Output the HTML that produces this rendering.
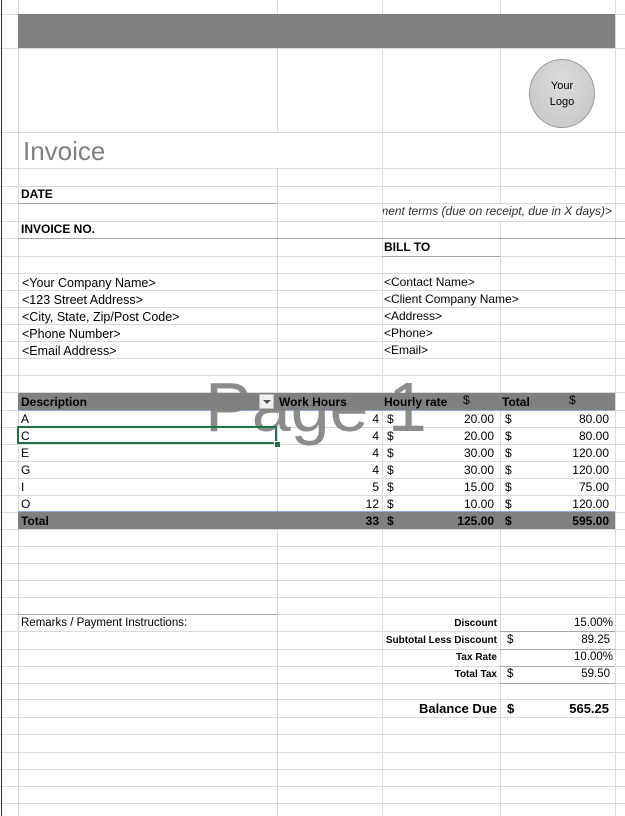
<!DOCTYPE html>
<html><head><meta charset="utf-8"><style>
body{margin:0;width:625px;height:816px;overflow:hidden;background:#fff;font-family:"Liberation Sans",sans-serif;position:relative}
.h{position:absolute;left:0;width:625px;height:1px;background:#dadada}
.v{position:absolute;top:0;height:816px;width:1px;background:#dadada}
.a{position:absolute;white-space:nowrap}
.t{position:absolute;font-size:12px;line-height:17px;white-space:nowrap;color:#000;z-index:2}
.r{text-align:right}
.b{font-weight:bold}
.ln{position:absolute;height:1px;background:#a6a6a6}
</style></head><body>
<div class="v" style="left:18px"></div><div class="v" style="left:277px"></div><div class="v" style="left:382px"></div><div class="v" style="left:500px"></div><div class="v" style="left:615px"></div>
<div class="h" style="top:14px"></div><div class="h" style="top:48px"></div><div class="h" style="top:132px"></div><div class="h" style="top:168px"></div><div class="h" style="top:186px"></div><div class="h" style="top:203px"></div><div class="h" style="top:221px"></div><div class="h" style="top:238px"></div><div class="h" style="top:256px"></div><div class="h" style="top:273px"></div><div class="h" style="top:290px"></div><div class="h" style="top:307px"></div><div class="h" style="top:324px"></div><div class="h" style="top:341px"></div><div class="h" style="top:358px"></div><div class="h" style="top:375px"></div><div class="h" style="top:392px"></div><div class="h" style="top:410px"></div><div class="h" style="top:427px"></div><div class="h" style="top:444px"></div><div class="h" style="top:461px"></div><div class="h" style="top:478px"></div><div class="h" style="top:495px"></div><div class="h" style="top:512px"></div><div class="h" style="top:529px"></div><div class="h" style="top:546px"></div><div class="h" style="top:563px"></div><div class="h" style="top:580px"></div><div class="h" style="top:597px"></div><div class="h" style="top:614px"></div><div class="h" style="top:631px"></div><div class="h" style="top:649px"></div><div class="h" style="top:666px"></div><div class="h" style="top:683px"></div><div class="h" style="top:699px"></div><div class="h" style="top:717px"></div><div class="h" style="top:734px"></div><div class="h" style="top:752px"></div><div class="h" style="top:769px"></div><div class="h" style="top:786px"></div><div class="h" style="top:803px"></div>
<div class="a" style="left:1px;top:0;width:1px;height:816px;background:#2020a0"></div>
<div class="a" style="left:19px;top:133px;width:363px;height:35px;background:#fff"></div>
<div class="a" style="left:19px;top:49px;width:258px;height:83px;background:#fff"></div>
<div class="a" style="left:383px;top:204px;width:232px;height:17px;background:#fff"></div>
<div class="a" style="left:18px;top:14px;width:597px;height:34px;background:#808080"></div>
<div class="a" style="left:529px;top:59px;width:66px;height:69px;border-radius:50%;background:radial-gradient(ellipse at 50% 35%,#dcdcdc,#c4c4c4);border:1px solid #999;font-size:11px;line-height:16px;text-align:center;box-sizing:border-box;padding-top:18px;color:#000">Your<br>Logo</div>
<div class="a" style="left:23px;top:136px;font-size:26px;color:#808080">Invoice</div>
<div class="t b" style="left:21px;top:186px;font-size:12px">DATE</div>
<div class="ln" style="left:18px;top:203px;width:259px"></div>
<div class="t" style="left:383px;top:203px;width:229px;overflow:hidden;font-style:italic;font-size:12px;color:#333;direction:rtl">&lt;Payment terms (due on receipt, due in X days)&gt;</div>
<div class="t b" style="left:21px;top:221px">INVOICE NO.</div>
<div class="ln" style="left:18px;top:238px;width:607px"></div>
<div class="t b" style="left:384px;top:239px">BILL TO</div>
<div class="ln" style="left:382px;top:256px;width:118px"></div>
<div class="t" style="left:22px;top:275px;font-size:12.5px">&lt;Your Company Name&gt;</div>
<div class="t" style="left:22px;top:292px;font-size:12.5px">&lt;123 Street Address&gt;</div>
<div class="t" style="left:22px;top:309px;font-size:12.5px">&lt;City, State, Zip/Post Code&gt;</div>
<div class="t" style="left:22px;top:326px;font-size:12.5px">&lt;Phone Number&gt;</div>
<div class="t" style="left:22px;top:343px;font-size:12.5px">&lt;Email Address&gt;</div>
<div class="t" style="left:384px;top:274px">&lt;Contact Name&gt;</div>
<div class="t" style="left:384px;top:291px">&lt;Client Company Name&gt;</div>
<div class="t" style="left:384px;top:308px">&lt;Address&gt;</div>
<div class="t" style="left:384px;top:325px">&lt;Phone&gt;</div>
<div class="t" style="left:384px;top:342px">&lt;Email&gt;</div>
<div class="a" style="left:18px;top:393px;width:597px;height:17px;background:#808080"></div>
<div class="a" style="left:18px;top:410px;width:597px;height:1px;background:#8ea9db"></div>
<div class="a" style="left:18px;top:512px;width:597px;height:17px;background:#808080"></div>
<div class="a" style="left:18px;top:511px;width:597px;height:1px;background:#8ea9db"></div>
<div class="a" style="left:205px;top:362px;font-size:70px;line-height:90px;color:rgba(128,128,128,0.9);z-index:1">Page 1</div>
<div class="t b" style="left:21px;top:394px">Description</div>
<div class="a" style="left:259px;top:394px;width:15px;height:15px;background:#f0f0f0;border:1px solid #bbb;box-sizing:border-box;z-index:2"><div style="margin:5px auto 0;width:0;height:0;border-left:4px solid transparent;border-right:4px solid transparent;border-top:4px solid #555"></div></div>
<div class="t b" style="left:279px;top:394px">Work Hours</div>
<div class="t b" style="left:384px;top:394px">Hourly rate</div>
<div class="t" style="left:463px;top:392px">$</div>
<div class="t b" style="left:502px;top:394px">Total</div>
<div class="t" style="left:569px;top:392px">$</div>
<div class="t" style="left:21px;top:411px">A</div><div class="t" style="left:21px;top:428px">C</div><div class="t" style="left:21px;top:445px">E</div><div class="t" style="left:21px;top:462px">G</div><div class="t" style="left:21px;top:479px">I</div><div class="t" style="left:21px;top:496px">O</div>
<div class="t r" style="left:300px;width:79px;top:411px">4</div><div class="t r" style="left:300px;width:79px;top:428px">4</div><div class="t r" style="left:300px;width:79px;top:445px">4</div><div class="t r" style="left:300px;width:79px;top:462px">4</div><div class="t r" style="left:300px;width:79px;top:479px">5</div><div class="t r" style="left:300px;width:79px;top:496px">12</div>
<div class="t" style="left:387px;top:411px">$</div><div class="t" style="left:387px;top:428px">$</div><div class="t" style="left:387px;top:445px">$</div><div class="t" style="left:387px;top:462px">$</div><div class="t" style="left:387px;top:479px">$</div><div class="t" style="left:387px;top:496px">$</div>
<div class="t r" style="left:420px;width:74px;top:411px">20.00</div><div class="t r" style="left:420px;width:74px;top:428px">20.00</div><div class="t r" style="left:420px;width:74px;top:445px">30.00</div><div class="t r" style="left:420px;width:74px;top:462px">30.00</div><div class="t r" style="left:420px;width:74px;top:479px">15.00</div><div class="t r" style="left:420px;width:74px;top:496px">10.00</div>
<div class="t" style="left:505px;top:411px">$</div><div class="t" style="left:505px;top:428px">$</div><div class="t" style="left:505px;top:445px">$</div><div class="t" style="left:505px;top:462px">$</div><div class="t" style="left:505px;top:479px">$</div><div class="t" style="left:505px;top:496px">$</div>
<div class="t r" style="left:530px;width:79px;top:411px">80.00</div><div class="t r" style="left:530px;width:79px;top:428px">80.00</div><div class="t r" style="left:530px;width:79px;top:445px">120.00</div><div class="t r" style="left:530px;width:79px;top:462px">120.00</div><div class="t r" style="left:530px;width:79px;top:479px">75.00</div><div class="t r" style="left:530px;width:79px;top:496px">120.00</div>
<div class="t b" style="left:21px;top:513px">Total</div>
<div class="t b r" style="left:300px;width:79px;top:513px">33</div>
<div class="t b" style="left:387px;top:513px">$</div>
<div class="t b r" style="left:420px;width:74px;top:513px">125.00</div>
<div class="t b" style="left:505px;top:513px">$</div>
<div class="t b r" style="left:530px;width:79px;top:513px">595.00</div>
<div class="a" style="left:17px;top:426px;width:260px;height:18px;border:2px solid #217346;box-sizing:border-box;z-index:3"></div>
<div class="a" style="left:274px;top:441px;width:5px;height:5px;background:#217346;border:1px solid #fff;z-index:3"></div>
<div class="ln" style="left:18px;top:614px;width:259px"></div>
<div class="t" style="left:21px;top:615px;font-size:11.5px">Remarks / Payment Instructions:</div>
<div class="t b r" style="left:370px;width:127px;top:615px;font-size:10px">Discount</div>
<div class="t r" style="left:505px;width:108px;top:615px;font-size:11.5px">15.00%</div>
<div class="t b r" style="left:370px;width:127px;top:632px;font-size:10px">Subtotal Less Discount</div>
<div class="t" style="left:507px;top:632px;font-size:11.5px">$</div>
<div class="t r" style="left:505px;width:105px;top:632px;font-size:11.5px">89.25</div>
<div class="t b r" style="left:370px;width:127px;top:649px;font-size:10px">Tax Rate</div>
<div class="t r" style="left:505px;width:108px;top:649px;font-size:11.5px">10.00%</div>
<div class="t b r" style="left:370px;width:127px;top:666px;font-size:10px">Total Tax</div>
<div class="t" style="left:507px;top:666px;font-size:11.5px">$</div>
<div class="t r" style="left:505px;width:105px;top:666px;font-size:11.5px">59.50</div>
<div class="ln" style="left:500px;top:631px;width:115px"></div><div class="ln" style="left:500px;top:649px;width:115px"></div><div class="ln" style="left:500px;top:666px;width:115px"></div><div class="ln" style="left:500px;top:683px;width:115px"></div>
<div class="t b r" style="left:370px;width:127px;top:700px;font-size:13px">Balance Due</div>
<div class="t b" style="left:507px;top:700px;font-size:13px">$</div>
<div class="t b r" style="left:520px;width:89px;top:700px;font-size:13px">565.25</div>
</body></html>
